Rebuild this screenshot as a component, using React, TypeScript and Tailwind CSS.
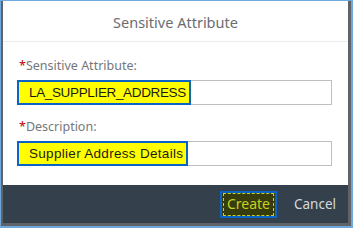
import React from 'react';

const Field: React.FC<{ label: string; value: string; tracking: string }> = ({ label, value, tracking }) => (
  <div className="flex flex-col">
    <label className="text-[12.5px] leading-[16px] text-[#74777a] pl-[2px]" style={{ fontFamily: '"Noto Sans", sans-serif' }}>
      <span className="text-[#bb0000]">*</span>
      {label}
    </label>
    <div className="mt-[6px] h-[25px] w-[315px] border border-[#bfbfbf] bg-white flex">
      <span
        className={`h-[25px] -mt-px -ml-px border-2 border-[#0a64c8] bg-[#ffff00] pl-[10px] pr-[3px] text-[13.5px] leading-[21px] text-[#1a1a1a] ${tracking}`}
        style={{ fontFamily: '"Liberation Sans", Arial, sans-serif' }}
      >
        {value}
      </span>
    </div>
  </div>
);

const App: React.FC = () => {
  return (
    <div className="w-[353px] h-[228px] border-t border-l border-r-2 border-b-2 border-[#6fa8dc] bg-white">
      <div className="h-full flex flex-col border-l-2 border-r-[3px] border-b-[3px] border-[#5f6368]">
        <div
          className="h-[41px] shrink-0 flex items-center justify-center pt-[3px] border-b border-[#ececec] text-[14.5px] text-[#6a6d70]"
          style={{ fontFamily: '"Noto Sans", sans-serif' }}
        >
          Sensitive Attribute
        </div>
        <div className="flex-1 flex flex-col gap-[14px] pl-[14px] pt-[16px]">
          <Field label="Sensitive Attribute:" value="LA_SUPPLIER_ADDRESS" tracking="tracking-[-0.35px]" />
          <Field label="Description:" value="Supplier Address Details" tracking="tracking-[0.3px]" />
        </div>
        <div className="h-[38px] shrink-0 bg-[#34404b] flex items-center justify-end gap-[17px] pr-[12px]">
          <button className="h-[27px] border-2 border-[#0a64c8] bg-[#363c0e] px-[1px]">
            <span
              className="block h-full border border-dashed border-[#c8d21e] px-[3px] text-[14px] leading-[20px] text-[#c8d21e]"
              style={{ fontFamily: '"Noto Sans", sans-serif' }}
            >
              Create
            </span>
          </button>
          <span className="text-[13.5px] text-[#d5dadd]" style={{ fontFamily: '"Noto Sans", sans-serif' }}>
            Cancel
          </span>
        </div>
      </div>
    </div>
  );
};

export default App;
